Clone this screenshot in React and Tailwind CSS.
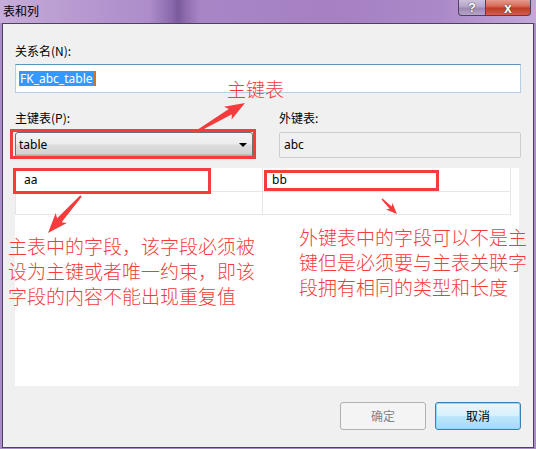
import React from 'react';

const RED = '#f53b3b';

function arrowPts(x1, y1, x2, y2, headLen, headW, tailW, neckW, sweep) {
  const dx = x2 - x1, dy = y2 - y1, L = Math.hypot(dx, dy);
  const ux = dx / L, uy = dy / L, px = -uy, py = ux;
  const nx = x2 - ux * headLen, ny = y2 - uy * headLen;
  const bx = nx - ux * sweep, by = ny - uy * sweep;
  const pts = [
    [x1 + px * tailW / 2, y1 + py * tailW / 2],
    [nx + px * neckW / 2, ny + py * neckW / 2],
    [bx + px * headW / 2, by + py * headW / 2],
    [x2, y2],
    [bx - px * headW / 2, by - py * headW / 2],
    [nx - px * neckW / 2, ny - py * neckW / 2],
    [x1 - px * tailW / 2, y1 - py * tailW / 2],
  ];
  return pts.map((p) => p[0].toFixed(1) + ',' + p[1].toFixed(1)).join(' ');
}

export default function App() {
  const ui = { fontFamily: '"Noto Sans", "Noto Sans CJK SC", sans-serif' };
  const cjk = { fontFamily: '"Noto Sans CJK SC", sans-serif' };
  return (
    <div
      className="relative w-[536px] h-[449px] overflow-hidden bg-[#a98bc6] text-black"
      style={ui}
    >
      {/* title bar */}
      <div className="flex h-[23px] bg-[linear-gradient(90deg,#c6acd9_0px,#b99bd1_70px,#ad8cc9_150px,#8a68ab_172px,#7a5a9c_178px,#8e6cae_186px,#a886c6_200px,#a580c3_330px,#ab89c8_440px,#c3a8d8_536px)]">
        <div className="pl-[3px] pt-[3px] text-[12px] leading-[16px]" style={cjk}>表和列</div>
        <div className="ml-auto mr-[5px] flex h-[16px]">
          <div className="w-[28px] h-[16px] border border-t-0 border-[#4f3f63] rounded-bl-[4px] bg-[linear-gradient(180deg,#cdbfdb_0%,#b6a4c8_45%,#9d89b3_55%,#b5a4c6_100%)] flex items-center justify-center">
            <span className="text-white font-bold text-[13px] leading-none [text-shadow:0_0_1px_#333,0_0_1px_#333]" style={{ fontFamily: '"Liberation Sans", sans-serif' }}>?</span>
          </div>
          <div className="w-[45px] h-[16px] border border-t-0 border-l-0 border-[#4f3f63] rounded-br-[4px] bg-[linear-gradient(180deg,#e39a8c_0%,#d86b5a_40%,#c23a28_55%,#d0604c_100%)] flex items-center justify-center">
            <span className="text-white font-bold text-[14px] leading-none [text-shadow:0_0_1px_#333,0_0_1px_#333]" style={{ fontFamily: '"Liberation Sans", sans-serif' }}>x</span>
          </div>
        </div>
      </div>

      {/* client area */}
      <div className="mx-[2px] h-[425px] border border-[#4e4160] bg-[#f0f0f0] px-[12px] pt-[19px] flex flex-col">
        <div className="h-[16px] text-[12px] leading-[16px]" style={cjk}>关系名(N):</div>
        <div className="mt-[5px] h-[29px] w-[506px] border border-[#b5cfe7] border-t-[#5f93bd] bg-white flex items-center pl-[3px]">
          <span className="bg-[#3399ff] text-white text-[12px] leading-[15px] h-[15px] px-[1px]">FK_abc_table</span>
          <span className="w-[2px] h-[15px] bg-[#c5782a]"></span>
        </div>

        <div className="mt-[17px] flex h-[16px] text-[12px] leading-[16px]" style={cjk}>
          <div className="w-[264px]">主键表(P):</div>
          <div>外键表:</div>
        </div>

        <div className="mt-[6px] flex h-[26px]">
          <div className="w-[238px] h-[26px] border border-[#707070] rounded-[3px] bg-[linear-gradient(180deg,#f4f4f4_0%,#ececec_45%,#dddddd_50%,#d3d3d3_88%,#a0a0a0_92%,#e2e2e2_100%)] flex items-center pl-[3px] pr-[5px]">
            <span className="text-[12px]">table</span>
            <svg className="ml-auto" width="8" height="4" viewBox="0 0 8 4">
              <polygon points="0,0 8,0 4,4" fill="#000" />
            </svg>
          </div>
          <div className="ml-[26px] w-[242px] h-[26px] border border-[#cdcdcd] rounded-[2px] bg-[#f0f0f0] flex items-center pl-[4px]">
            <span className="text-[12px]">abc</span>
          </div>
        </div>

        <div className="mt-[10px] h-[218px] w-[504px] bg-white">
          <div className="w-[496px] border-b border-[#e6e6e6]">
            <div className="flex h-[24px] border-b border-[#e6e6e6]">
              <div className="w-[248px] border-r border-[#e6e6e6] flex items-center pl-[9px] text-[12px]">aa</div>
              <div className="flex-1 border-r border-[#e6e6e6] flex items-center pl-[9px] text-[12px]">bb</div>
            </div>
            <div className="flex h-[22px]">
              <div className="w-[248px] border-r border-l border-[#e6e6e6]"></div>
              <div className="flex-1 border-r border-[#e6e6e6]"></div>
            </div>
          </div>
        </div>

        <div className="mt-[16px] flex justify-end gap-[9px]">
          <div className="w-[86px] h-[28px] border border-[#adb2b5] rounded-[3px] bg-[#f4f4f4] flex items-center justify-center text-[12px] text-[#838383]" style={cjk}>确定</div>
          <div className="w-[86px] h-[28px] border border-[#3c7fb1] rounded-[3px] shadow-[inset_0_0_0_1px_#8fd8f8] bg-[linear-gradient(180deg,#eaf6fd_0%,#d9f0fc_48%,#bee6fd_52%,#a7d9f5_100%)] flex items-center justify-center text-[12px]" style={cjk}>取消</div>
        </div>
      </div>

      {/* annotations overlay */}
      <div className="absolute left-[10px] top-[129px] w-[246px] h-[30px] border-[3px] border-[#f53b3b]"></div>
      <div className="absolute left-[13px] top-[168px] w-[198px] h-[26px] border-[3px] border-[#f53b3b]"></div>
      <div className="absolute left-[264px] top-[170px] w-[175px] h-[21px] border-[3px] border-[#f53b3b]"></div>

      <div className="absolute left-[227px] top-[77px] text-[19px] leading-[24px] font-light text-[#f53b3b] whitespace-nowrap" style={cjk}>主键表</div>
      <div className="absolute left-[8px] top-[233px] text-[19px] leading-[25px] font-light text-[#f53b3b] whitespace-nowrap" style={cjk}>
        主表中的字段，该字段必须被<br />设为主键或者唯一约束，即该<br />字段的内容不能出现重复值
      </div>
      <div className="absolute left-[299px] top-[224px] text-[19px] leading-[25px] font-light text-[#f53b3b] whitespace-nowrap" style={cjk}>
        外键表中的字段可以不是主<br />键但是必须要与主表关联字<br />段拥有相同的类型和长度
      </div>

      <svg className="absolute left-0 top-0 pointer-events-none" width="536" height="449">
        <polygon points={arrowPts(196, 132, 245, 103, 17, 15, 2, 6, 3)} fill={RED} />
        <polygon points={arrowPts(81, 196, 48, 233, 17, 15, 2, 6, 3)} fill={RED} />
        <polygon points={arrowPts(382, 199, 397, 214, 9, 9, 1.5, 3, 2)} fill={RED} />
      </svg>
    </div>
  );
}
